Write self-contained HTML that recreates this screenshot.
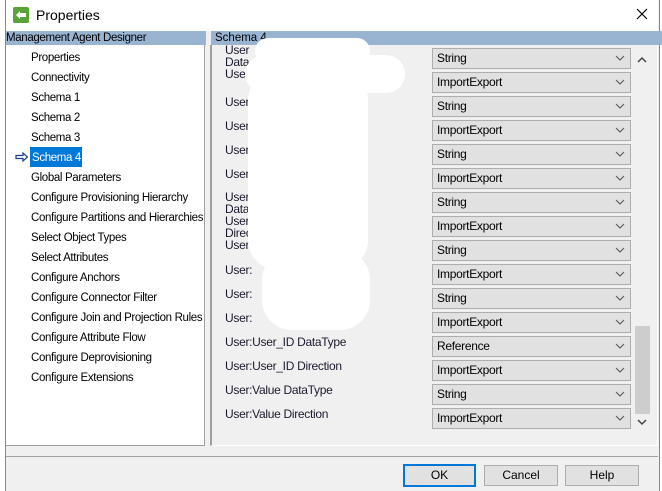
<!DOCTYPE html>
<html><head><style>
body{margin:0;width:662px;height:491px;overflow:hidden;background:#f0f0f0;font-family:"Liberation Sans",sans-serif;font-size:12px;color:#000;position:relative}
.a{position:absolute}
.dd{position:absolute;left:432px;width:193px;height:19px;border:1px solid #adadad;background:#e1e1e1;line-height:19px;padding-left:4px;box-sizing:content-box;font-size:12px;letter-spacing:-0.3px}
.dd svg{position:absolute;right:5px;top:6px}
.li{position:absolute;left:31px;font-size:11.5px;letter-spacing:-0.35px;white-space:nowrap;margin-top:2px}
.lb{position:absolute;left:225px;font-size:12px;color:#1a1a2e;letter-spacing:-0.3px}
.btn{position:absolute;top:465px;height:19px;border:1px solid #adadad;background:#e1e1e1;text-align:center;line-height:19px}
</style></head><body>
<div class="a" style="left:0;top:0;width:5px;height:491px;background:#fff"></div>
<div class="a" style="left:659px;top:0;width:3px;height:491px;background:#fff"></div>
<div class="a" style="left:5px;top:0;width:653px;height:491px;border-left:1px solid #888;border-right:1px solid #888;background:#f0f0f0"></div>
<div class="a" style="left:6px;top:0;width:652px;height:31px;background:#fff"></div>
<div class="a" style="left:13px;top:7px;width:16px;height:16px;background:#5aa33a;border-radius:2px"></div>
<svg class="a" style="left:15px;top:10px" width="12" height="10"><path d="M1 5 L5 1 L5 3 L11 3 L11 7 L5 7 L5 9 Z" fill="#fff"/></svg>
<div class="a" style="left:36px;top:7px;font-size:14px">Properties</div>
<svg class="a" style="left:636px;top:8px" width="12" height="12"><path d="M1 1L11 11M11 1L1 11" stroke="#000" stroke-width="1.2"/></svg>

<div class="a" style="left:6px;top:31px;width:200px;height:14px;background:#99b4d1;line-height:15px;font-size:11.5px;letter-spacing:-0.35px">Management Agent Designer</div>
<div class="a" style="left:211px;top:31px;width:447px;height:14px;background:#99b4d1;line-height:15px;padding-left:4px;font-size:11.5px">Schema 4</div>
<div class="a" style="left:6px;top:45px;width:198px;height:400px;background:#fff;border-right:1px solid #a0a0a0;border-bottom:1px solid #a0a0a0"></div>
<div class="li" style="top:50px">Properties</div>
<div class="li" style="top:70px">Connectivity</div>
<div class="li" style="top:90px">Schema 1</div>
<div class="li" style="top:110px">Schema 2</div>
<div class="li" style="top:130px">Schema 3</div>
<div class="a" style="left:30px;top:147px;width:52px;height:20px;background:#0078d7"></div>
<div class="li" style="top:150px;color:#fff;left:32px">Schema 4</div>
<svg class="a" style="left:15px;top:152px" width="14" height="10"><path d="M1 3.5H8V1L12.5 5L8 9V6.5H1Z" fill="#fff" stroke="#1b3f8b" stroke-width="1.2"/></svg>
<div class="li" style="top:170px">Global Parameters</div>
<div class="li" style="top:190px">Configure Provisioning Hierarchy</div>
<div class="li" style="top:210px">Configure Partitions and Hierarchies</div>
<div class="li" style="top:230px">Select Object Types</div>
<div class="li" style="top:250px">Select Attributes</div>
<div class="li" style="top:270px">Configure Anchors</div>
<div class="li" style="top:290px">Configure Connector Filter</div>
<div class="li" style="top:310px">Configure Join and Projection Rules</div>
<div class="li" style="top:330px">Configure Attribute Flow</div>
<div class="li" style="top:350px">Configure Deprovisioning</div>
<div class="li" style="top:370px">Configure Extensions</div>

<div class="a" style="left:210px;top:45px;width:445px;height:400px;border-left:2px solid #a0a0a0;border-right:1px solid #fff;border-bottom:1px solid #fff"></div>

<div class="lb" style="top:44px;line-height:12px">User<br>Data<br>User</div>
<div class="lb" style="top:95px">User</div>
<div class="lb" style="top:119px">User</div>
<div class="lb" style="top:143px">User</div>
<div class="lb" style="top:167px">User</div>
<div class="lb" style="top:191px;line-height:12px">User:<br>DataT<br>User:<br>Direct<br>User:</div>
<div class="lb" style="top:263px">User:</div>
<div class="lb" style="top:287px">User:</div>
<div class="lb" style="top:311px">User:</div>
<div class="lb" style="top:335px">User:User_ID DataType</div>
<div class="lb" style="top:359px">User:User_ID Direction</div>
<div class="lb" style="top:383px">User:Value DataType</div>
<div class="lb" style="top:407px">User:Value Direction</div>

<div class="a" style="left:255px;top:38px;width:115px;height:26px;background:#fff;border-radius:13px"></div>
<div class="a" style="left:245px;top:55px;width:160px;height:38px;background:#fff;border-radius:19px"></div>
<div class="a" style="left:248px;top:70px;width:120px;height:200px;background:#fff;border-radius:30px"></div>
<div class="a" style="left:262px;top:250px;width:108px;height:80px;background:#fff;border-radius:30px"></div>

<div class="dd" style="top:48px">String<svg width="10" height="6"><path d="M1 1L5 5L9 1" stroke="#555" fill="none"/></svg></div>
<div class="dd" style="top:72px">ImportExport<svg width="10" height="6"><path d="M1 1L5 5L9 1" stroke="#555" fill="none"/></svg></div>
<div class="dd" style="top:96px">String<svg width="10" height="6"><path d="M1 1L5 5L9 1" stroke="#555" fill="none"/></svg></div>
<div class="dd" style="top:120px">ImportExport<svg width="10" height="6"><path d="M1 1L5 5L9 1" stroke="#555" fill="none"/></svg></div>
<div class="dd" style="top:144px">String<svg width="10" height="6"><path d="M1 1L5 5L9 1" stroke="#555" fill="none"/></svg></div>
<div class="dd" style="top:168px">ImportExport<svg width="10" height="6"><path d="M1 1L5 5L9 1" stroke="#555" fill="none"/></svg></div>
<div class="dd" style="top:192px">String<svg width="10" height="6"><path d="M1 1L5 5L9 1" stroke="#555" fill="none"/></svg></div>
<div class="dd" style="top:216px">ImportExport<svg width="10" height="6"><path d="M1 1L5 5L9 1" stroke="#555" fill="none"/></svg></div>
<div class="dd" style="top:240px">String<svg width="10" height="6"><path d="M1 1L5 5L9 1" stroke="#555" fill="none"/></svg></div>
<div class="dd" style="top:264px">ImportExport<svg width="10" height="6"><path d="M1 1L5 5L9 1" stroke="#555" fill="none"/></svg></div>
<div class="dd" style="top:288px">String<svg width="10" height="6"><path d="M1 1L5 5L9 1" stroke="#555" fill="none"/></svg></div>
<div class="dd" style="top:312px">ImportExport<svg width="10" height="6"><path d="M1 1L5 5L9 1" stroke="#555" fill="none"/></svg></div>
<div class="dd" style="top:336px">Reference<svg width="10" height="6"><path d="M1 1L5 5L9 1" stroke="#555" fill="none"/></svg></div>
<div class="dd" style="top:360px">ImportExport<svg width="10" height="6"><path d="M1 1L5 5L9 1" stroke="#555" fill="none"/></svg></div>
<div class="dd" style="top:384px">String<svg width="10" height="6"><path d="M1 1L5 5L9 1" stroke="#555" fill="none"/></svg></div>
<div class="dd" style="top:408px">ImportExport<svg width="10" height="6"><path d="M1 1L5 5L9 1" stroke="#555" fill="none"/></svg></div>

<svg class="a" style="left:637px;top:56px" width="10" height="7"><path d="M1 6L5 2L9 6" stroke="#444" stroke-width="1.5" fill="none"/></svg>
<div class="a" style="left:635px;top:326px;width:15px;height:88px;background:#cdcdcd"></div>
<svg class="a" style="left:637px;top:419px" width="10" height="7"><path d="M1 1L5 5L9 1" stroke="#444" stroke-width="1.5" fill="none"/></svg>

<div class="a" style="left:6px;top:456px;width:652px;height:1px;background:#a0a0a0"></div>
<div class="btn" style="left:403px;width:69px;border:2px solid #0078d7;top:464px">OK</div>
<div class="btn" style="left:484px;width:72px">Cancel</div>
<div class="btn" style="left:565px;width:72px">Help</div>
</body></html>
